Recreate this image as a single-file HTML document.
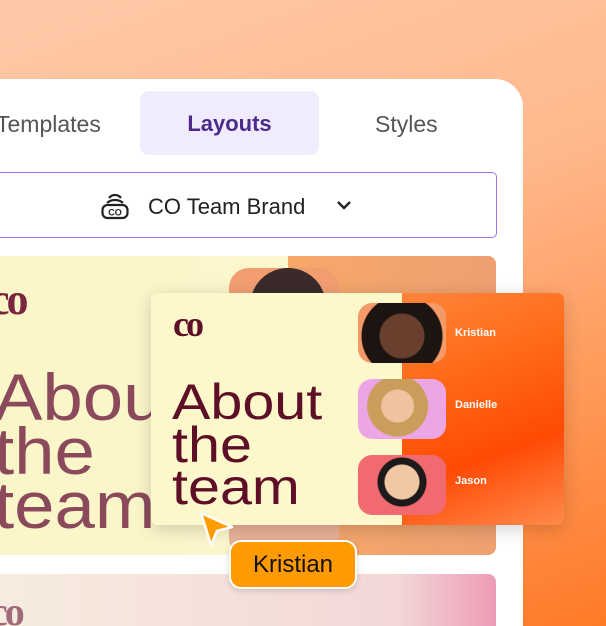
<!DOCTYPE html>
<html><head><meta charset="utf-8"><style>
*{margin:0;padding:0;box-sizing:border-box}
html,body{width:606px;height:626px;overflow:hidden}
body{position:relative;font-family:"Liberation Sans",sans-serif;
background:linear-gradient(160deg,#fec9a8 0%,#ffb98e 40%,#ff9a5a 70%,#ff7a28 100%);}
.panel{position:absolute;left:-30px;top:79px;width:553px;height:547px;background:#fff;border-radius:0 28px 0 0;}
.tab{position:absolute;top:91px;height:64px;line-height:66px;font-size:23px;color:#555;}
.lay{left:140px;width:179px;background:#f0ebfd;border-radius:9px;text-align:center;color:#4b2a8a;font-weight:bold;font-size:22px}
.dd{position:absolute;left:-10px;top:172px;width:507px;height:66px;border:1.5px solid #a46ef2;border-radius:5px;}
.ddt{position:absolute;left:148px;top:194px;font-size:22px;color:#222}
.bg1{position:absolute;left:0;top:256px;width:496px;height:299px;border-radius:0 8px 8px 0;
background:linear-gradient(90deg,#fbf6c8 0,#fbf6cc 288px,#f6a86a 288px,#eea070 100%);overflow:hidden}
.bg2{position:absolute;left:0;top:574px;width:496px;height:60px;border-radius:0 8px 0 0;background:linear-gradient(90deg,#f7ecdf,#f3d7d7 80%,#ed9cb6);overflow:hidden}
.fc{position:absolute;left:151px;top:293px;width:413px;height:232px;border-radius:7px;overflow:hidden;
background:linear-gradient(90deg,#fdf8cb 0,#fdf8cb 251px,transparent 251px),linear-gradient(160deg,#ff9d5a,#ff6a18 50%,#ff4a05 75%,#ff8a4a);box-shadow:0 4px 18px rgba(0,0,0,.18)}
.ph{position:absolute;left:207px;width:88px;height:60px;border-radius:14px;overflow:hidden}
.nm{position:absolute;left:304px;color:#fff;font-size:11px;font-weight:bold}
.big{color:#5c0f26;font-size:50px;line-height:42.5px;transform-origin:0 0;transform:scaleX(1.15)}
.co{font-family:'Liberation Serif',serif;font-weight:bold;color:#5c0f26;letter-spacing:-3px}
</style></head><body>
<div class="panel"></div>
<div class="tab" style="left:-4px">Templates</div>
<div class="tab lay">Layouts</div>
<div class="tab" style="left:375px">Styles</div>
<div class="dd"></div>
<svg style="position:absolute;left:100px;top:191px" width="30" height="30" viewBox="0 0 30 30" fill="none" stroke="#222" stroke-width="2.2"><path d="M9 7c3-4 9-4 12 0M7 12c4-4 12-4 16 0"/><rect x="2.5" y="14" width="25" height="13" rx="5"/><text x="15" y="24.5" font-size="9" font-weight="bold" text-anchor="middle" fill="#222" stroke="none" font-family="Liberation Sans">CO</text></svg>
<div class="ddt">CO Team Brand</div>
<svg style="position:absolute;left:335px;top:199px" width="18" height="14"><path d="M3 3l6 6 6-6" fill="none" stroke="#222" stroke-width="2.4"/></svg>
<div class="bg1">
 <div style="position:absolute;left:229px;top:12px;width:110px;height:290px;border-radius:20px;background:linear-gradient(#f29d70,#eab49c)"></div>
 <div style="position:absolute;left:250px;top:12px;width:76px;height:40px;border-radius:38px 38px 0 0;background:#3a2a2a"></div>
 <div class="co" style="position:absolute;left:-10px;top:18px;font-size:44px;color:#7a2640">co</div>
 <div class="big" style="position:absolute;left:-6px;top:114px;font-size:66px;line-height:54px;color:#8a4a5c;transform:scaleX(1.1)">About<br>the<br>team</div>
</div>
<div class="bg2"><div class="co" style="position:absolute;left:-10px;top:14px;font-size:40px;color:#a06a7a">co</div></div>
<div class="fc">
 <div class="co" style="position:absolute;left:22px;top:10px;font-size:36px">co</div>
 <div class="big" style="position:absolute;left:21px;top:88px">About<br>the<br>team</div>
 <div class="ph" style="top:10px;background:radial-gradient(circle at 50% 55%,#6a3f2e 0 22px,#1c1410 23px 40px,#f49a68 41px)"></div>
 <div class="ph" style="top:86px;background:radial-gradient(circle at 45% 45%,#f0c2a0 0 16px,#c99e5a 17px 30px,#eca6e6 31px)"></div>
 <div class="ph" style="top:162px;background:radial-gradient(circle at 50% 45%,#f1c7a4 0 17px,#1c1a1a 18px 24px,#f06a70 25px)"></div>
 <div class="nm" style="top:34px">Kristian</div>
 <div class="nm" style="top:106px">Danielle</div>
 <div class="nm" style="top:182px">Jason</div>
</div>
<svg style="position:absolute;left:196px;top:508px" width="42" height="42"><path d="M5 5L36 19 21 23 15 37Z" fill="#ff9c00" stroke="#fff" stroke-width="2.5" stroke-linejoin="round"/></svg>
<div style="position:absolute;left:229px;top:540px;width:128px;height:49px;background:#ff9a00;border:2px solid #fff;border-radius:12px;box-shadow:0 2px 6px rgba(0,0,0,.15);font-size:24px;color:#111;text-align:center;line-height:45px">Kristian</div>
</body></html>
